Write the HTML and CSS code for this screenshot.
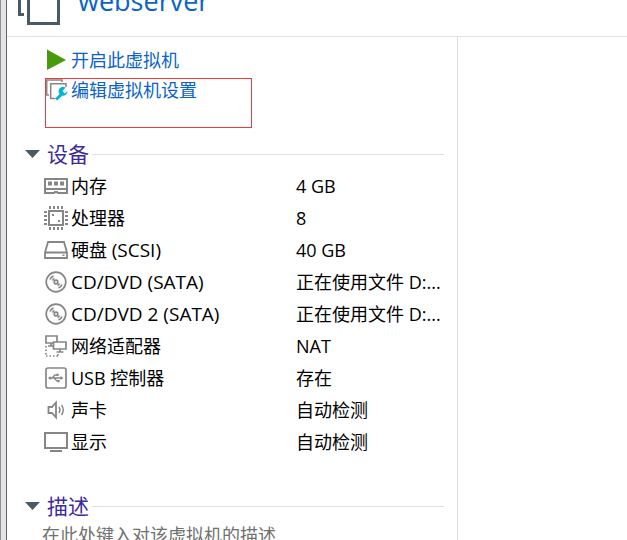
FILE: index.html
```html
<!DOCTYPE html>
<html lang="zh-CN">
<head>
<meta charset="utf-8">
<meta name="viewport" content="width=device-width, initial-scale=1">
<title>webserver</title>
<link rel="stylesheet" href="styles.css">
</head>
<body>
<div class="window">
  <div class="splitter"></div>
  <main class="page">
    <header class="header">
      <svg class="header-icon" width="44" height="44" viewBox="0 0 44 44" fill="none" stroke="#485a66">
        <path stroke-width="3" d="M6 32.500H1.500V1h26v6"/>
        <path stroke-width="3" d="M10.500 10.500h30v31h-30z"/>
      </svg>
      <h1 class="title">webserver</h1>
    </header>
    <div class="content">
      <div class="details">
        <nav class="actions">
          <a class="action" href="#start">
            <svg class="icon" width="24" height="24" viewBox="0 0 24 24"><path fill="#459a0e" d="M2 1.500 21 12 2 22z"/></svg>
            <span>开启此虚拟机</span>
          </a>
          <div class="highlight">
            <a class="action" href="#settings">
              <svg class="icon" width="24" height="24" viewBox="0 0 24 24" fill="none">
                <path stroke="#868686" stroke-width="1.500" d="M3 17H.7V2H16v2M9 20.500H4.700V5.700H20V9"/>
                <path stroke="#00b4d8" stroke-width="3" d="m10 21.500 7-6.500"/>
                <path fill="#00b4d8" d="M19.500 9.500a4.500 4.500 0 1 0 2 4L18.500 15.500 16.500 13z"/>
              </svg>
              <span>编辑虚拟机设置</span>
            </a>
          </div>
        </nav>

        <section class="section">
          <h2 class="section-title">
            <button class="toggle" type="button" aria-expanded="true"><svg class="arrow" width="15" height="8" viewBox="0 0 15 8"><path fill="#485a66" d="M0 0h15L7.500 8z"/></svg>设备</button>
          </h2>
          <table class="devices">
            <tbody>
            <tr>
              <th scope="row"><div class="device"><svg class="icon" width="24" height="24" viewBox="0 0 24 24" fill="none" stroke="#868686">
                <path stroke-width="2" d="M1 5h22v10H1zM1 15v4h9l1-1h2l1 1h9v-4"/><path stroke-width="2" d="M5 8.500h2v2H5zM11 8.500h2v2h-2zM17 8.500h2v2h-2z"/></svg><span>内存</span></div></th>
              <td>4 GB</td>
            </tr>
            <tr>
              <th scope="row"><div class="device"><svg class="icon" width="24" height="24" viewBox="0 0 24 24" fill="none" stroke="#868686">
                <path stroke-width="2" d="M5 5h14v14H5z"/><path stroke-width="3" stroke-dasharray="2 2" d="M5 1.500h14M5 22.500h14M1.500 5v14M22.500 5v14"/><path fill="#868686" stroke="none" d="M8 8h2v2H8zM14 14h2v2h-2z"/></svg><span>处理器</span></div></th>
              <td>8</td>
            </tr>
            <tr>
              <th scope="row"><div class="device"><svg class="icon" width="24" height="24" viewBox="0 0 24 24" fill="none" stroke="#868686">
                <path stroke-width="1.800" d="M4 4h16l3 10.500V20H1v-5.500zM1 14.500h22"/><path fill="#868686" stroke="none" d="M18.500 16.500h2v1.500h-2z"/></svg><span>硬盘 <span class="latin">(SCSI)</span></span></div></th>
              <td>40 GB</td>
            </tr>
            <tr>
              <th scope="row"><div class="device"><svg class="icon" width="24" height="24" viewBox="0 0 24 24" fill="none" stroke="#868686" stroke-width="1.700">
                <circle cx="12" cy="12" r="9.800"/><circle cx="12" cy="12" r="1.800"/><path d="M6 9.500q1-2.500 3.500-3.500M8.500 10.500q.5-1.500 2-2M18 14.500q-1 2.500-3.500 3.500M15.500 13.500q-.5 1.500-2 2"/></svg><span class="latin">CD/DVD (SATA)</span></div></th>
              <td>正在使用文件 D:...</td>
            </tr>
            <tr>
              <th scope="row"><div class="device"><svg class="icon" width="24" height="24" viewBox="0 0 24 24" fill="none" stroke="#868686" stroke-width="1.700">
                <circle cx="12" cy="12" r="9.800"/><circle cx="12" cy="12" r="1.800"/><path d="M6 9.500q1-2.500 3.500-3.500M8.500 10.500q.5-1.500 2-2M18 14.500q-1 2.500-3.500 3.500M15.500 13.500q-.5 1.500-2 2"/></svg><span class="latin">CD/DVD 2 (SATA)</span></div></th>
              <td>正在使用文件 D:...</td>
            </tr>
            <tr>
              <th scope="row"><div class="device"><svg class="icon" width="24" height="24" viewBox="0 0 24 24" fill="none" stroke="#868686" stroke-width="1.700">
                <path d="M9 9H2V2h11v6M7 9v3M4 12h5M9.500 8H22v7H9.500zM16 15v3M12.500 18h7"/><path stroke-dasharray="1.500 2" d="M2 12v10M2 22h12M14 20v2"/></svg><span>网络适配器</span></div></th>
              <td>NAT</td>
            </tr>
            <tr>
              <th scope="row"><div class="device"><svg class="icon" width="24" height="24" viewBox="0 0 24 24" fill="none" stroke="#868686">
                <rect x="2" y="2" width="20" height="20" rx="2" stroke-width="1.700"/><path stroke-width="1.300" d="M6 12h11M8 12l3-3h2M10 12l3 3h2"/><path fill="#868686" stroke="none" d="m19.500 12-3-2v4zM12.500 7.800h2.200v2.200h-2.200zM13.500 14h2.200v2.200h-2.200z"/><circle cx="6" cy="12" r="1.500" fill="#868686" stroke="none"/></svg><span>USB 控制器</span></div></th>
              <td>存在</td>
            </tr>
            <tr>
              <th scope="row"><div class="device"><svg class="icon" width="24" height="24" viewBox="0 0 24 24" fill="none" stroke="#868686" stroke-width="1.800">
                <path d="M4.500 9H8l4-4.500v15L8 15H4.500z"/><path stroke-width="1.400" d="M15 9q2 3 0 6M17.500 7q3.500 5 0 10"/></svg><span>声卡</span></div></th>
              <td>自动检测</td>
            </tr>
            <tr>
              <th scope="row"><div class="device"><svg class="icon" width="24" height="24" viewBox="0 0 24 24" fill="none" stroke="#868686" stroke-width="2">
                <path d="M1 3h22v15H1zM6 21h12"/></svg><span>显示</span></div></th>
              <td>自动检测</td>
            </tr>
            </tbody>
          </table>
        </section>

        <section class="section">
          <h2 class="section-title">
            <button class="toggle" type="button" aria-expanded="true"><svg class="arrow" width="15" height="8" viewBox="0 0 15 8"><path fill="#485a66" d="M0 0h15L7.500 8z"/></svg>描述</button>
          </h2>
          <p class="description">在此处键入对该虚拟机的描述</p>
        </section>
      </div>
      <div class="preview"></div>
    </div>
  </main>
</div>
</body>
</html>
```
FILE: styles.css
```css
* {
  box-sizing: border-box;
}

body {
  margin: 0;
  background: #fff;
  color: #000;
  font: 18px/24px "Open Sans", "Noto Sans CJK SC", sans-serif;
  overflow: hidden;
}

.window {
  display: flex;
  height: 100vh;
  overflow: hidden;
}

.splitter {
  flex: none;
  width: 7px;
  background: #e3e3e8;
  border-left: 1px solid #8c8fa0;
  border-right: 1px solid #606068;
}

.page {
  flex: 1;
  min-width: 0;
  display: flex;
  flex-direction: column;
}

.header {
  flex: none;
  display: flex;
  align-items: flex-end;
  gap: 16px;
  height: 37px;
  padding: 0 11px 10px;
  border-bottom: 1px solid #e0e0e0;
  overflow: hidden;
}

.header-icon {
  flex: none;
}

.title {
  margin: 0;
  padding-bottom: 9px;
  color: #0a63c9;
  font-size: 27px;
  line-height: 32px;
  font-weight: 400;
}

.content {
  flex: 1;
  display: flex;
  min-height: 0;
}

.details {
  flex: 0 0 451px;
  padding: 8px 13px 0 18px;
  border-right: 1px solid #e0e0e0;
}

.preview {
  flex: 1;
}

.actions {
  padding-left: 20px;
}

.action {
  display: flex;
  align-items: center;
  gap: 2px;
  height: 30px;
  color: #0a63c9;
  text-decoration: none;
}

.highlight {
  width: 207px;
  height: 50px;
  margin-top: 3px;
  border: 1px solid #f03a3a;
}

.highlight .action {
  height: 22px;
  gap: 1px;
}

.icon {
  flex: none;
  display: block;
}

.section {
  padding-top: 11px;
}

.section-title {
  display: flex;
  align-items: center;
  gap: 3px;
  margin: 0;
  padding-bottom: 1px;
  font-weight: 400;
}

.section-title::after {
  content: "";
  flex: 1;
  border-top: 1px solid #e0e0e0;
}

.toggle {
  display: flex;
  align-items: center;
  gap: 7px;
  padding: 0;
  border: 0;
  background: none;
  color: #3c2ba0;
  font: inherit;
  font-size: 21px;
  line-height: 30px;
}

.devices {
  width: 100%;
  border-collapse: collapse;
  table-layout: fixed;
}

.devices th,
.devices td {
  height: 32px;
  padding: 0;
  font-weight: 400;
  text-align: left;
  white-space: nowrap;
}

.devices th {
  width: 271px;
  padding-left: 19px;
}

.device {
  display: flex;
  align-items: center;
  gap: 3px;
}

.latin {
  font-size: 19px;
}

.section + .section {
  padding-top: 33px;
}

.description {
  margin: 0;
  padding-left: 17px;
  color: #707070;
  line-height: 26px;
}
```
